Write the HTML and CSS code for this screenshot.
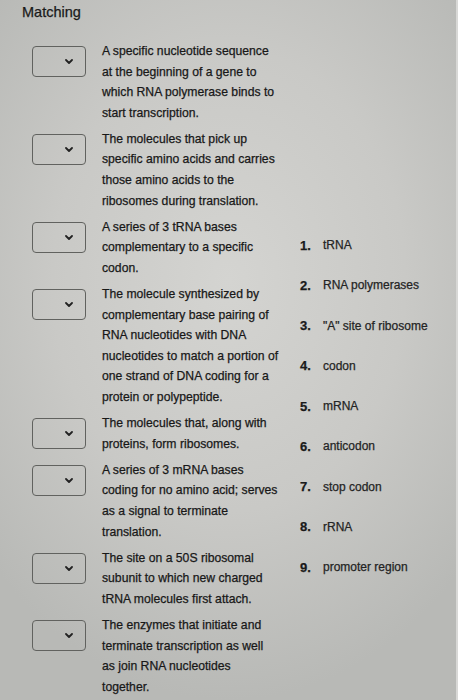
FILE: index.html
```html
<!DOCTYPE html>
<html lang="en">
<head>
    <meta charset="UTF-8">
    <meta name="viewport" content="width=device-width, initial-scale=1.0">
    <title>Matching</title>
    <link rel="stylesheet" href="styles.css">
</head>
<body>
    <div class="page">
        <h1 class="title">Matching</h1>

        <div class="matching">
            <div class="prompts">
                <div class="row">
                    <div class="select"><svg width="8" height="5" viewBox="0 0 8 5"><polyline points="1,1 4,4 7,1"/></svg></div>
                    <p class="prompt">A specific nucleotide sequence<br>at the beginning of a gene to<br>which RNA polymerase binds to<br>start transcription.</p>
                </div>
                <div class="row">
                    <div class="select"><svg width="8" height="5" viewBox="0 0 8 5"><polyline points="1,1 4,4 7,1"/></svg></div>
                    <p class="prompt">The molecules that pick up<br>specific amino acids and carries<br>those amino acids to the<br>ribosomes during translation.</p>
                </div>
                <div class="row">
                    <div class="select"><svg width="8" height="5" viewBox="0 0 8 5"><polyline points="1,1 4,4 7,1"/></svg></div>
                    <p class="prompt">A series of 3 tRNA bases<br>complementary to a specific<br>codon.</p>
                </div>
                <div class="row">
                    <div class="select"><svg width="8" height="5" viewBox="0 0 8 5"><polyline points="1,1 4,4 7,1"/></svg></div>
                    <p class="prompt">The molecule synthesized by<br>complementary base pairing of<br>RNA nucleotides with DNA<br>nucleotides to match a portion of<br>one strand of DNA coding for a<br>protein or polypeptide.</p>
                </div>
                <div class="row">
                    <div class="select"><svg width="8" height="5" viewBox="0 0 8 5"><polyline points="1,1 4,4 7,1"/></svg></div>
                    <p class="prompt">The molecules that, along with<br>proteins, form ribosomes.</p>
                </div>
                <div class="row">
                    <div class="select"><svg width="8" height="5" viewBox="0 0 8 5"><polyline points="1,1 4,4 7,1"/></svg></div>
                    <p class="prompt">A series of 3 mRNA bases<br>coding for no amino acid; serves<br>as a signal to terminate<br>translation.</p>
                </div>
                <div class="row">
                    <div class="select"><svg width="8" height="5" viewBox="0 0 8 5"><polyline points="1,1 4,4 7,1"/></svg></div>
                    <p class="prompt">The site on a 50S ribosomal<br>subunit to which new charged<br>tRNA molecules first attach.</p>
                </div>
                <div class="row">
                    <div class="select"><svg width="8" height="5" viewBox="0 0 8 5"><polyline points="1,1 4,4 7,1"/></svg></div>
                    <p class="prompt">The enzymes that initiate and<br>terminate transcription as well<br>as join RNA nucleotides<br>together.</p>
                </div>
            </div>

            <ol class="answers">
                <li><span class="num">1.</span>tRNA</li>
                <li><span class="num">2.</span>RNA polymerases</li>
                <li><span class="num">3.</span>"A" site of ribosome</li>
                <li><span class="num">4.</span>codon</li>
                <li><span class="num">5.</span>mRNA</li>
                <li><span class="num">6.</span>anticodon</li>
                <li><span class="num">7.</span>stop codon</li>
                <li><span class="num">8.</span>rRNA</li>
                <li><span class="num">9.</span>promoter region</li>
            </ol>
        </div>
    </div>
</body>
</html>
```

FILE: styles.css
```css
body {
    margin: 0;
    font-family: "Liberation Sans", Arial, sans-serif;
    color: #1c1c1c;
    background: radial-gradient(ellipse 70% 60% at 50% 40%, #d4d4d1 0%, #c9c9c6 55%, #b8b9b6 100%);
}

.page {
    min-height: 700px;
    box-sizing: border-box;
    padding: 4px 0 0 22px;
    border-right: 2px solid #d8d8d6;
    /* text reads a little heavy on this screen */
    -webkit-text-stroke: 0.25px currentColor;
}

.title {
    margin: 0;
    font-size: 14.5px;
    line-height: 17px;
    font-weight: normal;
    color: #1a1a1a;
}

.matching {
    display: flex;
    margin-top: 20px;
}

.prompts {
    display: flex;
    flex-direction: column;
    gap: 5.5px;
    padding-left: 10px;
}

.row {
    display: flex;
    gap: 16px;
}

.select {
    flex: none;
    width: 54px;
    height: 31px;
    box-sizing: border-box;
    margin-top: 5px;
    border: 1.3px solid #61625f;
    border-radius: 4px;
    display: flex;
    align-items: center;
    justify-content: flex-end;
    padding-right: 12px;
}

.select polyline {
    fill: none;
    stroke: #222;
    stroke-width: 1.8;
    stroke-linecap: round;
    stroke-linejoin: round;
}

.prompt {
    margin: 0;
    width: 184px;
    font-size: 12.2px;
    line-height: 20.6px;
    color: #181818;
    white-space: nowrap;
}

.answers {
    list-style: none;
    margin: 0 0 0 14px;
    padding: 184px 0 0;
}

.answers li {
    height: 40.25px;
    display: flex;
    align-items: center;
    font-size: 12px;
    color: #242424;
}

.num {
    width: 23px;
    flex: none;
    font-size: 13px;
    font-weight: bold;
    color: #1a1a1a;
}
```
